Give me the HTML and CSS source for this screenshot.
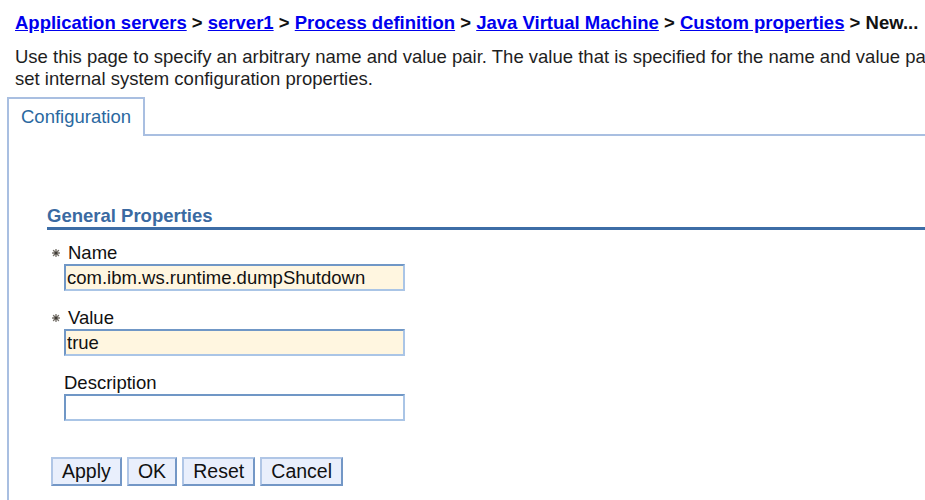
FILE: index.html
```html
<!DOCTYPE html>
<html lang="en">
<head>
<meta charset="utf-8">
<title>New custom property</title>
<link rel="stylesheet" href="styles.css">
</head>
<body>
<div class="page">
  <div class="crumbs"><a href="#">Application servers</a> &gt; <a href="#">server1</a> &gt; <a href="#">Process definition</a> &gt; <a href="#">Java Virtual Machine</a> &gt; <a href="#">Custom properties</a> &gt; New...</div>
  <p class="desc">Use this page to specify an arbitrary name and value pair. The value that is specified for the name and value pair is a string that can set internal system configuration properties.</p>
  <div class="tabs">
    <div class="tab">Configuration</div>
    <div class="tab-fill"></div>
  </div>
  <div class="panel">
    <div class="section-title">General Properties</div>
    <div class="fields">
      <div class="field">
        <label class="lbl" for="f-name"><span class="req"><svg width="8" height="8" viewBox="0 0 8 8"><g stroke="#77726b" stroke-width="1.4" stroke-linecap="round"><line x1="4" y1="0.6" x2="4" y2="7.4"/><line x1="0.6" y1="4" x2="7.4" y2="4"/><line x1="1.5" y1="1.5" x2="6.5" y2="6.5"/><line x1="6.5" y1="1.5" x2="1.5" y2="6.5"/></g><circle cx="4" cy="4" r="1.5" fill="#3e3a35"/></svg></span>Name</label>
        <input id="f-name" class="inp inp-req" type="text" value="com.ibm.ws.runtime.dumpShutdown">
      </div>
      <div class="field">
        <label class="lbl" for="f-value"><span class="req"><svg width="8" height="8" viewBox="0 0 8 8"><g stroke="#77726b" stroke-width="1.4" stroke-linecap="round"><line x1="4" y1="0.6" x2="4" y2="7.4"/><line x1="0.6" y1="4" x2="7.4" y2="4"/><line x1="1.5" y1="1.5" x2="6.5" y2="6.5"/><line x1="6.5" y1="1.5" x2="1.5" y2="6.5"/></g><circle cx="4" cy="4" r="1.5" fill="#3e3a35"/></svg></span>Value</label>
        <input id="f-value" class="inp inp-req" type="text" value="true">
      </div>
      <div class="field">
        <label class="lbl" for="f-desc">Description</label>
        <input id="f-desc" class="inp" type="text" value="">
      </div>
    </div>
    <div class="buttons">
      <button class="btn" type="button">Apply</button>
      <button class="btn" type="button">OK</button>
      <button class="btn" type="button">Reset</button>
      <button class="btn" type="button">Cancel</button>
    </div>
  </div>
</div>
</body>
</html>
```
FILE: styles.css
```css
html {
  overflow: hidden;
}
body {
  margin: 0;
  background: #ffffff;
  font-family: "Liberation Sans", Arial, sans-serif;
  font-size: 18.5px;
  color: #1e1e1e;
}
.page {
  width: 1120px;
  padding-left: 7px;
}
.crumbs {
  padding-top: 12px;
  padding-left: 8px;
  font-weight: bold;
  color: #111;
  white-space: nowrap;
}
.crumbs a {
  color: #0000ee;
  text-decoration: underline;
}
.desc {
  margin: 12px 0 0 0;
  padding-left: 8px;
  width: 1090px;
}
.tabs {
  display: flex;
  margin-top: 7px;
}
.tab {
  border: 2px solid #a9bfe1;
  border-bottom: none;
  padding: 7px 12px 8px 12px;
  color: #2a68a0;
  background: #fff;
}
.tab-fill {
  flex: 1;
  border-bottom: 2px solid #a9bfe1;
}
.panel {
  border-left: 2px solid #a9bfe1;
  padding: 69px 0 14px 0;
}
.section-title {
  margin-left: 38px;
  font-weight: bold;
  color: #3a6aa2;
  border-bottom: 3px solid #3d6da6;
}
.fields {
  padding-left: 55px;
  padding-top: 12px;
}
.field {
  margin-bottom: 16px;
}
.lbl {
  display: block;
  color: #111;
}
.req {
  display: inline-block;
  width: 8px;
  height: 8px;
  margin-left: -12px;
  margin-right: 8px;
  vertical-align: 2px;
}
.req svg {
  display: block;
}
.inp {
  display: block;
  box-sizing: border-box;
  width: 341px;
  height: 27px;
  margin: 0;
  padding: 1px 1px;
  font-family: "Liberation Sans", Arial, sans-serif;
  font-size: 18.5px;
  color: #111;
  background: #ffffff;
  border-style: solid;
  border-width: 2px;
  border-color: #7097c6 #aac5e6 #aac5e6 #7097c6;
  outline: none;
}
.inp-req {
  background: #fff6e0;
}
.buttons {
  padding-left: 42px;
  padding-top: 20px;
}
.btn {
  margin: 0;
  padding: 1px 9px;
  font-family: "Liberation Sans", Arial, sans-serif;
  font-size: 19.5px;
  color: #111;
  background: #e9effc;
  border-style: solid;
  border-width: 2px;
  border-color: #b0c6e6 #7397c6 #7397c6 #b0c6e6;
  line-height: normal;
}
```
